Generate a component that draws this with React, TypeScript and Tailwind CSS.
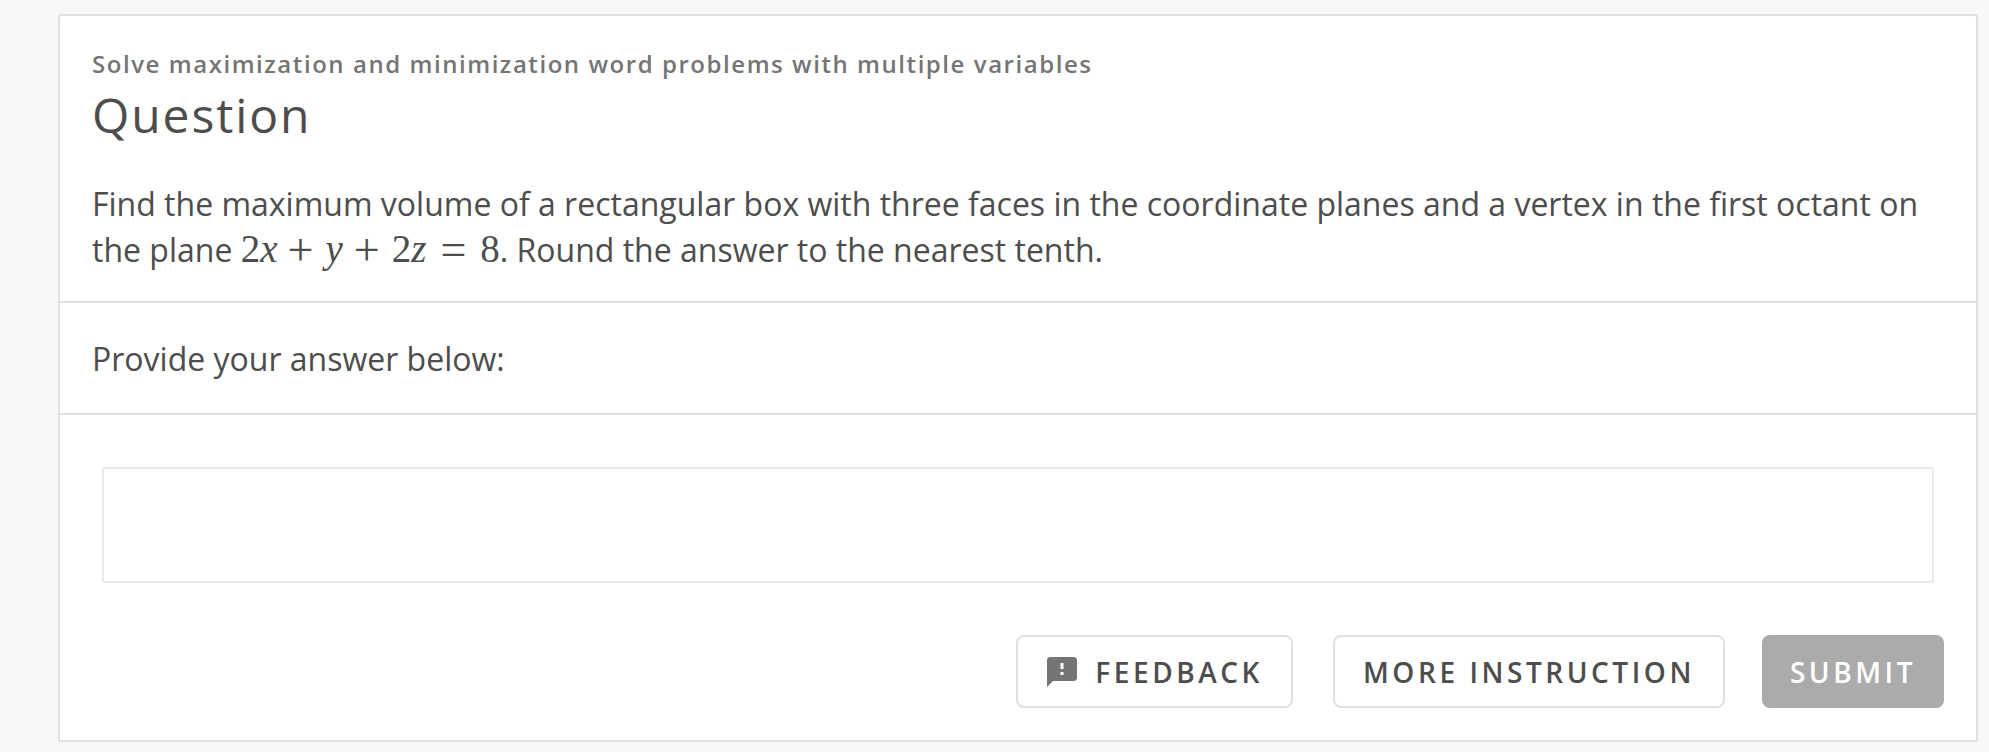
export default function App() {
  return (
    <div className="h-[752px] overflow-hidden bg-[#f8f8f8] pt-[14px] pl-[58px] pr-[11px] font-['Open_Sans',sans-serif] text-[#4d4d4d]">
      <div className="h-[728px] rounded-[3px] border-2 border-[#e0e0e0] bg-white">
        <div className="h-[287px] border-b-2 border-[#e0e0e0] pl-[32px] pr-[20px] pt-[33px]">
          <div className="text-[24px] leading-[30px] font-semibold tracking-[1.55px] text-[#757575]">
            Solve maximization and minimization word problems with multiple variables
          </div>
          <h1 className="mt-[6px] text-[48px] leading-[60px] tracking-[1.9px]">Question</h1>
          <p className="mt-[36px] text-[32px] leading-[46px]">
            Find the maximum volume of a rectangular box with three faces in the coordinate planes and a vertex in the first octant on the plane{' '}
            <span className="font-['Liberation_Serif',serif] text-[39px] leading-[30px]">
              2<i>x</i>
              <span className="ml-[10px] mr-[12px] align-[-3px] text-[46px] leading-[0px]">+</span>
              <i>y</i>
              <span className="ml-[11px] mr-[12px] align-[-3px] text-[46px] leading-[0px]">+</span>
              2<i>z</i>
              <span className="ml-[14px] mr-[14px] align-[-3px] text-[46px] leading-[0px]">=</span>8
            </span>
            . Round the answer to the nearest tenth.
          </p>
        </div>
        <div className="flex h-[112px] items-center border-b-2 border-[#e0e0e0] pl-[32px] pt-[2px] text-[32px]">
          Provide your answer below:
        </div>
        <div className="px-[42px] pt-[52px]">
          <div className="h-[116px] rounded-[3px] border-2 border-[#e8e8e8]" />
          <div className="-mr-[10px] mt-[52px] flex justify-end">
            <button className="flex h-[73px] items-center gap-[15px] rounded-[8px] border-2 border-[#e0e0e0] pl-[26px] pr-[28px] pt-[1px] text-[28px] font-[550] tracking-[3.55px] text-[#4d4d4d]">
              <svg viewBox="0 0 24 24" className="h-[36px] w-[36px] fill-[#757575]">
                <path d="M20 2H4c-1.1 0-2 .9-2 2v18l4-4h14c1.1 0 2-.9 2-2V4c0-1.1-.9-2-2-2zm-7 12h-2v-2h2v2zm0-4h-2V6h2v4z" />
              </svg>
              FEEDBACK
            </button>
            <button className="ml-[40px] h-[73px] rounded-[8px] border-2 border-[#e0e0e0] px-[28px] pt-[1px] text-[28px] font-[550] tracking-[3.55px] text-[#4d4d4d]">
              MORE INSTRUCTION
            </button>
            <button className="ml-[37px] h-[73px] rounded-[8px] bg-[#ababab] px-[28px] pt-[1px] text-[28px] font-[550] tracking-[3.55px] text-white">
              SUBMIT
            </button>
          </div>
        </div>
      </div>
    </div>
  )
}
